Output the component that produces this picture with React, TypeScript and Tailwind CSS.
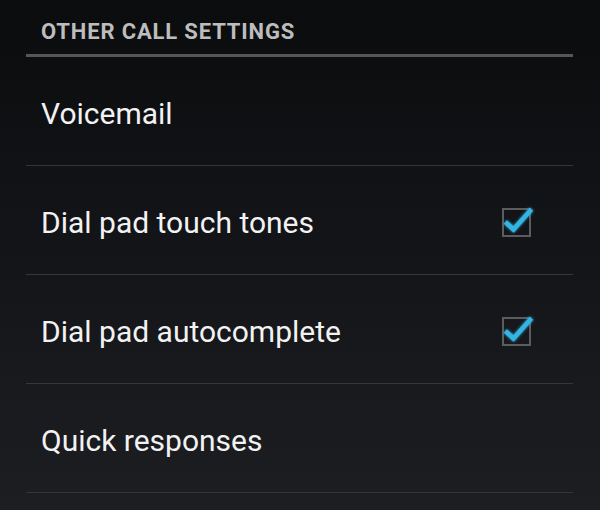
import React from "react";

const items = [
  { label: "Voicemail", checked: false },
  { label: "Dial pad touch tones", checked: true },
  { label: "Dial pad autocomplete", checked: true },
  { label: "Quick responses", checked: false },
];

function CheckBox() {
  return (
    <svg width="40" height="40" viewBox="0 0 40 40" className="shrink-0">
      <defs>
        <filter id="glow" x="-50%" y="-50%" width="200%" height="200%">
          <feGaussianBlur stdDeviation="1.6" result="b" />
          <feMerge>
            <feMergeNode in="b" />
            <feMergeNode in="SourceGraphic" />
          </feMerge>
        </filter>
      </defs>
      <rect x="6" y="6" width="27" height="27" fill="none" stroke="#5a5c60" strokeWidth="2" />
      <path
        d="M10 20.5 L16.5 26.5 L33 8"
        fill="none"
        stroke="#33b5e5"
        strokeWidth="4.5"
        strokeLinecap="square"
        filter="url(#glow)"
      />
    </svg>
  );
}

export default function App() {
  return (
    <div
      className="w-full h-[510px] overflow-hidden bg-gradient-to-b from-[#0b0c0e] to-[#1c1e22] px-[26px] pr-[27px]"
      style={{ fontFamily: "Roboto, 'Liberation Sans', sans-serif" }}
    >
      <div className="pt-[21px] pb-[11px] pl-[15px] border-b-[3px] border-[#555659]">
        <div className="text-[22px] leading-none font-bold tracking-[0.85px] text-[#bdbdbd]">OTHER CALL SETTINGS</div>
      </div>
      {items.map((it) => (
        <div
          key={it.label}
          className="h-[109px] pt-[5px] pl-[15px] pr-[36px] flex items-center justify-between border-b border-[#34363a]"
        >
          <span className="text-[30px] leading-none text-[#f2f2f2]">{it.label}</span>
          {it.checked && <CheckBox />}
        </div>
      ))}
    </div>
  );
}
